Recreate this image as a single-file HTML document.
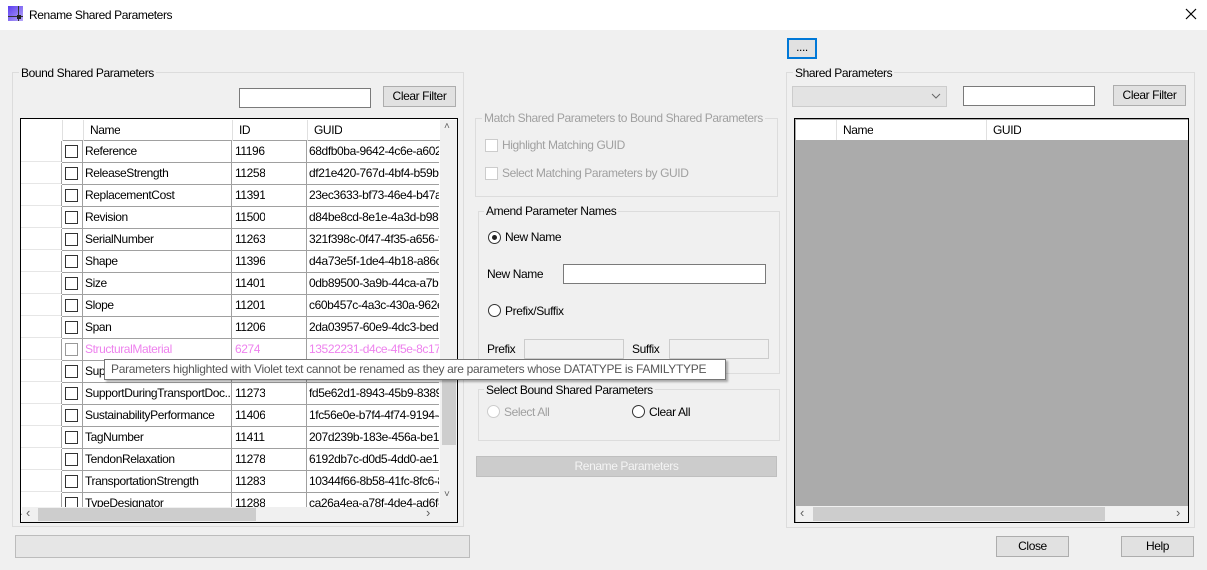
<!DOCTYPE html>
<html><head><meta charset="utf-8"><style>
*{box-sizing:border-box;margin:0;padding:0}
body{width:1207px;height:570px;background:#f0f0f0;font-family:"Liberation Sans",sans-serif;font-size:12px;color:#000;position:relative;overflow:hidden}
.a{position:absolute}
.t{white-space:nowrap;letter-spacing:-0.4px}
.gb{position:absolute;border:1px solid #dcdcdc}
.gl{position:absolute;background:#f0f0f0;padding:0 2px;white-space:nowrap;letter-spacing:-0.4px}
.btn{position:absolute;background:#e1e1e1;border:1px solid #adadad;text-align:center;letter-spacing:-0.4px}
.inp{position:absolute;background:#fff;border:1px solid #7a7a7a}
.cb{position:absolute;width:13px;height:13px;border:1px solid #333;background:#fff}
.row{position:absolute;left:0;width:418px;height:22px;border-bottom:1px solid #a0a0a0}
.c{position:absolute;top:0;height:22px;line-height:21px;white-space:nowrap;overflow:hidden;letter-spacing:-0.4px}
.rad{position:absolute;width:13px;height:13px;border:1px solid #333;border-radius:50%;background:#fff}
.dis{color:#a0a0a0}
</style></head><body>
<div class="a" style="left:0;top:0;width:1207px;height:30px;background:#fff"></div>
<div class="a" style="left:8px;top:6px;width:15px;height:15px;background:linear-gradient(135deg,#5a3cf0,#b7a8f8)"></div>
<div class="a" style="left:18px;top:6px;width:1px;height:15px;background:#333"></div>
<div class="a" style="left:8px;top:16px;width:15px;height:1px;background:#333"></div>
<div class="a" style="left:17px;top:15px;width:4px;height:4px;background:#222"></div>
<div class="a t" style="left:29px;top:8px;font-size:12px">Rename Shared Parameters</div>
<svg class="a" style="left:1185px;top:8px" width="12" height="12"><path d="M1 1L11 11M11 1L1 11" stroke="#000" stroke-width="1.2"/></svg>

<div class="gb" style="left:12px;top:72px;width:452px;height:455px"></div>
<div class="gl" style="left:19px;top:66px">Bound Shared Parameters</div>
<div class="inp" style="left:239px;top:88px;width:132px;height:20px"></div>
<div class="btn" style="left:383px;top:86px;width:73px;height:21px;line-height:19px">Clear Filter</div>

<div class="a" style="left:20px;top:118px;width:438px;height:405px;border:1px solid #000;background:#fff;overflow:hidden">
 <div class="a" style="left:1px;top:1px;width:418px;height:21px;border-bottom:1px solid #a0a0a0;background:#fff">
  <div class="a" style="left:40px;top:0;width:1px;height:21px;background:#e0e0e0"></div>
  <div class="a" style="left:61px;top:0;width:1px;height:21px;background:#e0e0e0"></div>
  <div class="a" style="left:210px;top:0;width:1px;height:21px;background:#e0e0e0"></div>
  <div class="a" style="left:285px;top:0;width:1px;height:21px;background:#e0e0e0"></div>
  <div class="c" style="left:68px">Name</div>
  <div class="c" style="left:217px">ID</div>
  <div class="c" style="left:292px">GUID</div>
 </div>
 <div id="rows"></div>
 <div class="a" style="left:419px;top:1px;width:17px;height:387px;background:#f0f0f0"></div>
 <div class="a" style="left:421px;top:260px;width:14px;height:66px;background:#cdcdcd"></div>
 <div class="a" style="left:423px;top:2px;font-size:10px;color:#606060">˄</div>
 <div class="a" style="left:423px;top:370px;font-size:10px;color:#606060">˅</div>
 <div class="a" style="left:1px;top:388px;width:435px;height:15px;background:#f0f0f0"></div>
 <div class="a" style="left:17px;top:389px;width:218px;height:13px;background:#cdcdcd"></div>
 <div class="a" style="left:5px;top:386px;font-size:13px;color:#606060">‹</div>
 <div class="a" style="left:405px;top:386px;font-size:13px;color:#606060">›</div>
</div>
<div class="a" style="left:15px;top:535px;width:455px;height:23px;background:#e6e6e6;border:1px solid #bcbcbc"></div>

<div class="gb" style="left:475px;top:118px;width:303px;height:79px"></div>
<div class="gl dis" style="left:482px;top:111px">Match Shared Parameters to Bound Shared Parameters</div>
<div class="cb" style="left:485px;top:139px;border-color:#ccc"></div>
<div class="a t dis" style="left:502px;top:138px">Highlight Matching GUID</div>
<div class="cb" style="left:485px;top:167px;border-color:#ccc"></div>
<div class="a t dis" style="left:502px;top:166px">Select Matching Parameters by GUID</div>

<div class="gb" style="left:478px;top:211px;width:302px;height:163px"></div>
<div class="gl" style="left:484px;top:204px">Amend Parameter Names</div>
<div class="rad" style="left:488px;top:231px"></div><div class="a" style="left:492px;top:235px;width:5px;height:5px;border-radius:50%;background:#222"></div>
<div class="a t" style="left:505px;top:230px">New Name</div>
<div class="a t" style="left:487px;top:267px">New Name</div>
<div class="inp" style="left:563px;top:264px;width:203px;height:20px"></div>
<div class="rad" style="left:488px;top:304px"></div>
<div class="a t" style="left:505px;top:304px">Prefix/Suffix</div>
<div class="a t" style="left:487px;top:342px">Prefix</div>
<div class="a" style="left:524px;top:339px;width:100px;height:20px;border:1px solid #ccc;background:#f0f0f0"></div>
<div class="a t" style="left:632px;top:342px">Suffix</div>
<div class="a" style="left:669px;top:339px;width:100px;height:20px;border:1px solid #ccc;background:#f0f0f0"></div>

<div class="gb" style="left:478px;top:389px;width:302px;height:52px"></div>
<div class="gl" style="left:484px;top:383px">Select Bound Shared Parameters</div>
<div class="rad" style="left:487px;top:405px;border-color:#ccc"></div>
<div class="a t dis" style="left:504px;top:405px">Select All</div>
<div class="rad" style="left:632px;top:405px"></div>
<div class="a t" style="left:649px;top:405px">Clear All</div>
<div class="btn" style="left:476px;top:456px;width:301px;height:21px;line-height:19px;background:#ccc;border-color:#bfbfbf;color:#f4f4f4">Rename Parameters</div>

<div class="a" style="left:104px;top:359px;width:622px;height:21px;background:#fff;border:1px solid #767676;box-shadow:2px 2px 2px rgba(0,0,0,.3);line-height:19px;padding-left:6px;color:#575757;letter-spacing:-0.3px;white-space:nowrap;overflow:hidden">Parameters highlighted with Violet text cannot be renamed as they are parameters whose DATATYPE is FAMILYTYPE</div>

<div class="btn" style="left:787px;top:38px;width:30px;height:21px;border:2px solid #0078d7;line-height:15px">....</div>
<div class="gb" style="left:786px;top:72px;width:409px;height:456px"></div>
<div class="gl" style="left:793px;top:66px">Shared Parameters</div>
<div class="a" style="left:792px;top:86px;width:155px;height:21px;background:#e3e3e3;border:1px solid #ccc"></div>
<svg class="a" style="left:931px;top:93px" width="10" height="6"><path d="M1 1L5 5L9 1" stroke="#666" fill="none"/></svg>
<div class="inp" style="left:963px;top:86px;width:132px;height:20px"></div>
<div class="btn" style="left:1113px;top:85px;width:73px;height:21px;line-height:19px">Clear Filter</div>
<div class="a" style="left:794px;top:118px;width:395px;height:405px;border:1px solid #000;background:#ababab;overflow:hidden">
 <div class="a" style="left:1px;top:1px;width:392px;height:20px;background:#fff">
  <div class="a" style="left:40px;top:0;width:1px;height:20px;background:#e0e0e0"></div>
  <div class="a" style="left:190px;top:0;width:1px;height:20px;background:#e0e0e0"></div>
  <div class="c" style="left:47px;line-height:20px">Name</div>
  <div class="c" style="left:197px;line-height:20px">GUID</div>
 </div>
 <div class="a" style="left:1px;top:387px;width:392px;height:16px;background:#f0f0f0"></div>
 <div class="a" style="left:18px;top:388px;width:292px;height:14px;background:#cdcdcd"></div>
 <div class="a" style="left:5px;top:386px;font-size:13px;color:#606060">‹</div>
 <div class="a" style="left:381px;top:386px;font-size:13px;color:#606060">›</div>
</div>
<div class="btn" style="left:996px;top:536px;width:73px;height:21px;line-height:19px">Close</div>
<div class="btn" style="left:1121px;top:536px;width:73px;height:21px;line-height:19px">Help</div>

<script>
var d=[["Reference","11196","68dfb0ba-9642-4c6e-a602-f"],["ReleaseStrength","11258","df21e420-767d-4bf4-b59b-f"],["ReplacementCost","11391","23ec3633-bf73-46e4-b47a-"],["Revision","11500","d84be8cd-8e1e-4a3d-b98b"],["SerialNumber","11263","321f398c-0f47-4f35-a656-f9"],["Shape","11396","d4a73e5f-1de4-4b18-a86c-"],["Size","11401","0db89500-3a9b-44ca-a7b2"],["Slope","11201","c60b457c-4a3c-430a-962e"],["Span","11206","2da03957-60e9-4dc3-beda"],["StructuralMaterial","6274","13522231-d4ce-4f5e-8c17-"],["SupportDuringTransport","",""],["SupportDuringTransportDoc...","11273","fd5e62d1-8943-45b9-8389-"],["SustainabilityPerformance","11406","1fc56e0e-b7f4-4f74-9194-4"],["TagNumber","11411","207d239b-183e-456a-be1e"],["TendonRelaxation","11278","6192db7c-d0d5-4dd0-ae17"],["TransportationStrength","11283","10344f66-8b58-41fc-8fc6-8"],["TypeDesignator","11288","ca26a4ea-a78f-4de4-ad6f-1"]];
var h="";d.forEach(function(r,i){var v=i==9?"color:#ee82ee;":"";h+='<div class="row" style="top:'+(22+22*i)+'px;'+v+'"><div class="a" style="left:0;top:0;width:41px;height:22px;border-bottom:1px solid #e6e6e6;background:#fff;margin-top:-1px"></div><div class="a" style="left:40px;top:0;width:1px;height:22px;background:#a0a0a0"></div><div class="a" style="left:61px;top:0;width:1px;height:22px;background:#a0a0a0"></div><div class="a" style="left:210px;top:0;width:1px;height:22px;background:#a0a0a0"></div><div class="a" style="left:285px;top:0;width:1px;height:22px;background:#a0a0a0"></div><div class="cb" style="left:44px;top:4px;'+(i==9?"border-color:#999":"")+'"></div><div class="c" style="left:64px;width:145px">'+r[0]+'</div><div class="c" style="left:214px">'+r[1]+'</div><div class="c" style="left:288px;width:130px">'+r[2]+'</div></div>'});
document.getElementById("rows").innerHTML=h;
</script>
</body></html>
